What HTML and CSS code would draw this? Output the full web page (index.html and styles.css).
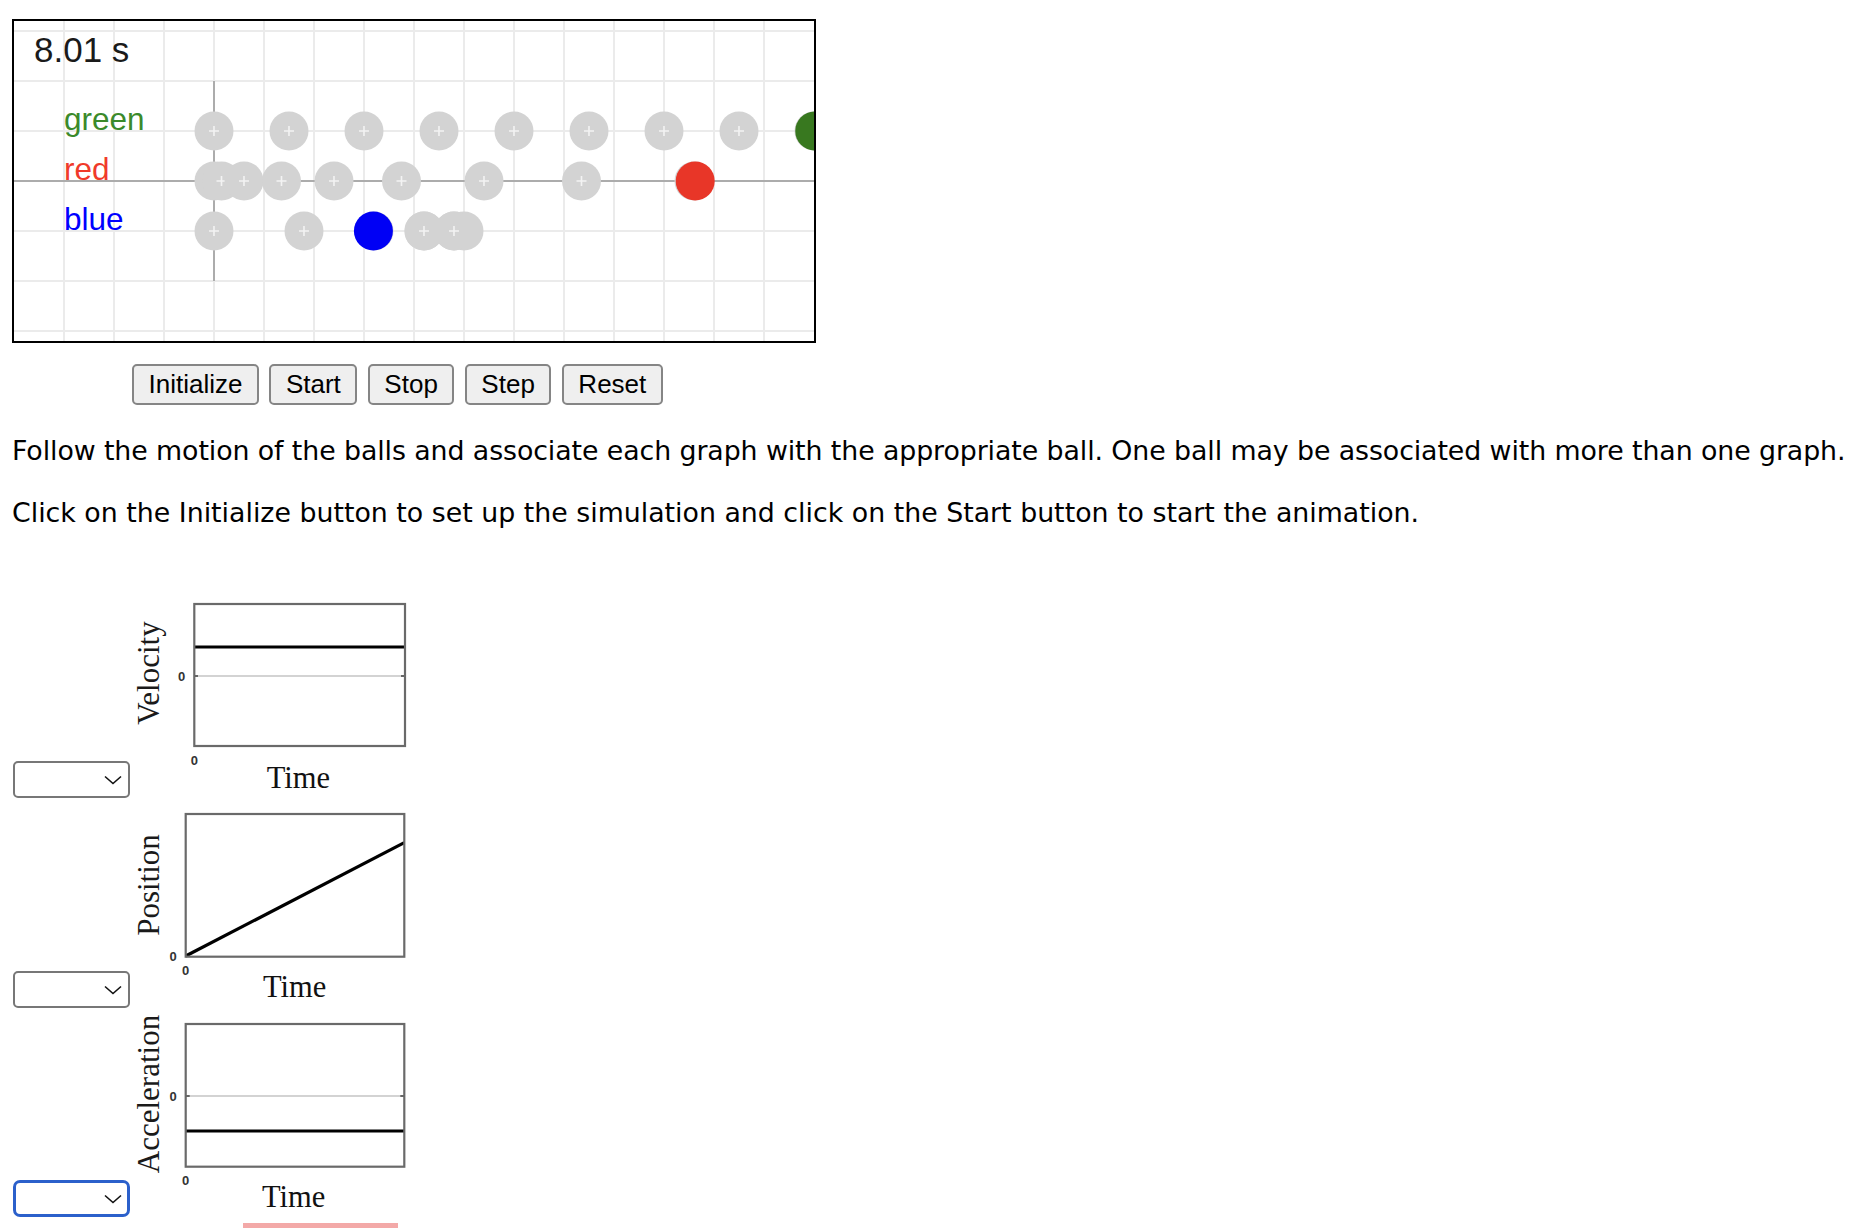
FILE: index.html
```html
<!DOCTYPE html>
<html lang="en">
<head>
<meta charset="utf-8">
<title>Ball motion</title>
<link rel="stylesheet" href="styles.css">
</head>
<body>
<div class="page">
  <div class="sim">
    <svg class="sim-canvas" width="800" height="320" viewBox="0 0 800 320">
      <g class="grid">
        <line x1="50" y1="0" x2="50" y2="320"/><line x1="100" y1="0" x2="100" y2="320"/>
        <line x1="150" y1="0" x2="150" y2="320"/><line x1="200" y1="0" x2="200" y2="320"/>
        <line x1="250" y1="0" x2="250" y2="320"/><line x1="300" y1="0" x2="300" y2="320"/>
        <line x1="350" y1="0" x2="350" y2="320"/><line x1="400" y1="0" x2="400" y2="320"/>
        <line x1="450" y1="0" x2="450" y2="320"/><line x1="500" y1="0" x2="500" y2="320"/>
        <line x1="550" y1="0" x2="550" y2="320"/><line x1="600" y1="0" x2="600" y2="320"/>
        <line x1="650" y1="0" x2="650" y2="320"/><line x1="700" y1="0" x2="700" y2="320"/>
        <line x1="750" y1="0" x2="750" y2="320"/>
        <line x1="0" y1="10" x2="800" y2="10"/><line x1="0" y1="60" x2="800" y2="60"/>
        <line x1="0" y1="110" x2="800" y2="110"/><line x1="0" y1="210" x2="800" y2="210"/>
        <line x1="0" y1="260" x2="800" y2="260"/><line x1="0" y1="310" x2="800" y2="310"/>
      </g>
      <g class="axes">
        <line x1="0" y1="160" x2="800" y2="160"/>
        <line x1="200" y1="60" x2="200" y2="260"/>
      </g>
      <text class="clock" x="20" y="41">8.01 s</text>
      <text class="lbl lbl-green" x="50" y="109">green</text>
      <text class="lbl lbl-red" x="50" y="159">red</text>
      <text class="lbl lbl-blue" x="50" y="209">blue</text>

      <g class="ghost">
        <!-- green: x = 200 + 75t -->
        <circle cx="200" cy="110" r="19.5"/><circle cx="275" cy="110" r="19.5"/>
        <circle cx="350" cy="110" r="19.5"/><circle cx="425" cy="110" r="19.5"/>
        <circle cx="500" cy="110" r="19.5"/><circle cx="575" cy="110" r="19.5"/>
        <circle cx="650" cy="110" r="19.5"/><circle cx="725" cy="110" r="19.5"/>
        <circle cx="800" cy="110" r="19.5"/>
      </g>
      <g class="plus">
        <path d="M195 110h10M200 105v10M270 110h10M275 105v10M345 110h10M350 105v10M420 110h10M425 105v10M495 110h10M500 105v10M570 110h10M575 105v10M645 110h10M650 105v10M720 110h10M725 105v10"/>
      </g>

      <!-- red: x = 200 + 7.5t^2 -->
      <g class="ghost-seq">
        <circle class="g" cx="200" cy="160" r="19.5"/><path class="p" d="M195 160h10M200 155v10"/>
        <circle class="g" cx="207.5" cy="160" r="19.5"/><path class="p" d="M202.5 160h10M207.5 155v10"/>
        <circle class="g" cx="230" cy="160" r="19.5"/><path class="p" d="M225 160h10M230 155v10"/>
        <circle class="g" cx="267.5" cy="160" r="19.5"/><path class="p" d="M262.5 160h10M267.5 155v10"/>
        <circle class="g" cx="320" cy="160" r="19.5"/><path class="p" d="M315 160h10M320 155v10"/>
        <circle class="g" cx="387.5" cy="160" r="19.5"/><path class="p" d="M382.5 160h10M387.5 155v10"/>
        <circle class="g" cx="470" cy="160" r="19.5"/><path class="p" d="M465 160h10M470 155v10"/>
        <circle class="g" cx="567.5" cy="160" r="19.5"/><path class="p" d="M562.5 160h10M567.5 155v10"/>
        <circle class="g" cx="680" cy="160" r="19.5"/>
      </g>

      <!-- blue: x = 200 + 100t - 10t^2 -->
      <g class="ghost-seq">
        <circle class="g" cx="200" cy="210" r="19.5"/><path class="p" d="M195 210h10M200 205v10"/>
        <circle class="g" cx="290" cy="210" r="19.5"/><path class="p" d="M285 210h10M290 205v10"/>
        <circle class="g" cx="360" cy="210" r="19.5"/>
        <circle class="g" cx="410" cy="210" r="19.5"/><path class="p" d="M405 210h10M410 205v10"/>
        <circle class="g" cx="440" cy="210" r="19.5"/><path class="p" d="M435 210h10M440 205v10"/>
        <circle class="g" cx="450" cy="210" r="19.5"/>
        <circle class="g" cx="440" cy="210" r="19.5"/><path class="p" d="M435 210h10M440 205v10"/>
        <circle class="g" cx="410" cy="210" r="19.5"/><path class="p" d="M405 210h10M410 205v10"/>
      </g>

      <circle class="ball-green" cx="800.75" cy="110" r="19.5"/>
      <circle class="ball-red" cx="681.2" cy="160" r="19.5"/>
      <circle class="ball-blue" cx="359.4" cy="210" r="19.5"/>
    </svg>
  </div>

  <div class="controls">
    <button class="btn" type="button">Initialize</button>
    <button class="btn" type="button">Start</button>
    <button class="btn" type="button">Stop</button>
    <button class="btn" type="button">Step</button>
    <button class="btn" type="button">Reset</button>
  </div>

  <p class="para para-1">Follow the motion of the balls and associate each graph with the appropriate ball. One ball may be associated with more than one graph.</p>
  <p class="para para-2">Click on the Initialize button to set up the simulation and click on the Start button to start the animation.</p>

  <div class="graphs">
    <div class="graph-row row-1">
      <div class="select">
        <svg class="chev" width="18" height="10" viewBox="0 0 18 10"><path d="M1 1.5l8 7 8-7"/></svg>
      </div>
      <svg class="graph" width="280" height="202" viewBox="0 0 280 202">
        <line class="zero" x1="64" y1="78" x2="275" y2="78"/>
        <path class="tick" d="M64 78h4M271 78h4"/>
        <line class="curve" x1="64" y1="49" x2="275" y2="49"/>
        <rect class="frame" x="64.3" y="6" width="210.7" height="142"/>
        <text class="zlab" x="51.7" y="78.5">0</text>
        <text class="zlab" x="64.3" y="162">0</text>
        <text class="axis-t" x="136.7" y="190">Time</text>
        <text class="axis-y" transform="translate(29 75) rotate(-90)">Velocity</text>
      </svg>
    </div>
    <div class="graph-row row-2">
      <div class="select">
        <svg class="chev" width="18" height="10" viewBox="0 0 18 10"><path d="M1 1.5l8 7 8-7"/></svg>
      </div>
      <svg class="graph" width="280" height="210" viewBox="0 0 280 210">
        <line class="curve" x1="55.7" y1="156" x2="274.3" y2="42.7"/>
        <rect class="frame" x="55.7" y="14" width="218.6" height="142.7"/>
        <text class="zlab" x="43" y="156">0</text>
        <text class="zlab" x="55.7" y="170">0</text>
        <text class="axis-t" x="133" y="197">Time</text>
        <text class="axis-y" transform="translate(29 85) rotate(-90)">Position</text>
      </svg>
    </div>
    <div class="graph-row row-3">
      <div class="select select-focus">
        <svg class="chev" width="18" height="10" viewBox="0 0 18 10"><path d="M1 1.5l8 7 8-7"/></svg>
      </div>
      <svg class="graph" width="280" height="210" viewBox="0 0 280 210">
        <line class="zero" x1="55.7" y1="86" x2="274.3" y2="86"/>
        <path class="tick" d="M55.7 86h4M270.3 86h4"/>
        <line class="curve" x1="55.7" y1="121" x2="274.3" y2="121"/>
        <rect class="frame" x="55.7" y="14" width="218.6" height="142.7"/>
        <text class="zlab" x="43" y="86">0</text>
        <text class="zlab" x="55.7" y="170">0</text>
        <text class="axis-t" x="132" y="197">Time</text>
        <text class="axis-y" transform="translate(29 84) rotate(-90)">Acceleration</text>
      </svg>
    </div>
    <div class="feedback-bar"></div>
  </div>
</div>
</body>
</html>
```

FILE: styles.css
```css
html, body {
  margin: 0;
  padding: 0;
  background: #ffffff;
}

.page {
  padding: 19px 0 0 12px;
  font-family: "DejaVu Sans", Verdana, sans-serif;
  color: #000;
}

/* ---------- simulation canvas ---------- */
.sim {
  width: 800px;
  height: 320px;
  border: 2px solid #000;
  overflow: hidden;
}

.sim-canvas {
  display: block;
}

.grid line {
  stroke: #ebebeb;
  stroke-width: 2;
}

.axes line {
  stroke: #acacac;
  stroke-width: 2;
}

.clock {
  font-family: "Liberation Sans", Arial, sans-serif;
  font-size: 35px;
  fill: #1a1a1a;
}

.lbl {
  font-family: "Liberation Sans", Arial, sans-serif;
  font-size: 31.5px;
}

.lbl-green { fill: #3b8a2b; }
.lbl-red { fill: #f03a2a; }
.lbl-blue { fill: #0000ff; }

.ghost circle,
.ghost-seq .g {
  fill: #d3d3d3;
}

.plus path,
.ghost-seq .p {
  stroke: #f3f3f3;
  stroke-width: 1.6;
  fill: none;
}

.ball-green { fill: #38781f; }
.ball-red { fill: #e83628; }
.ball-blue { fill: #0000f5; }

/* ---------- buttons ---------- */
.controls {
  display: flex;
  gap: 10.5px;
  margin: 21px 0 0 120px;
}

.btn {
  font-family: "Liberation Sans", Arial, sans-serif;
  font-size: 26px;
  line-height: 37px;
  height: 41px;
  padding: 0 14.5px;
  border: 2px solid #858585;
  border-radius: 5px;
  background: #efefef;
  color: #000;
}

/* ---------- instructions ---------- */
.para {
  font-size: 26.8px;
  line-height: 30px;
  margin: 0;
  white-space: nowrap;
}

.para-1 {
  margin-top: 31px;
  letter-spacing: -0.09px;
}

.para-2 {
  margin-top: 32px;
}

/* ---------- graphs ---------- */
.graphs {
  margin-top: 70px;
  display: flex;
  flex-direction: column;
}

.graph-row {
  display: flex;
  align-items: flex-end;
}

.select {
  width: 117px;
  height: 37px;
  box-sizing: border-box;
  margin-left: 1px;
  margin-bottom: 2px;
  border: 2px solid #777;
  border-radius: 5px;
  background: #fff;
  display: flex;
  align-items: center;
  justify-content: flex-end;
  padding-right: 6px;
}

.select-focus {
  border: 3px solid #2b60cb;
  border-radius: 7px;
  padding-right: 5px;
  margin-bottom: 3px;
}

.chev path {
  fill: none;
  stroke: #111;
  stroke-width: 1.6;
}

.graph {
  display: block;
}

.frame {
  fill: none;
  stroke: #6a6a6a;
  stroke-width: 2.2;
}

.zero {
  stroke: #c4c4c4;
  stroke-width: 1.6;
}

.tick {
  stroke: #444;
  stroke-width: 1.6;
}

.curve {
  stroke: #000;
  stroke-width: 3.2;
}

.zlab {
  font-family: "Liberation Sans", Arial, sans-serif;
  font-size: 13px;
  font-weight: bold;
  fill: #333;
  text-anchor: middle;
  dominant-baseline: central;
}

.axis-t {
  font-family: "Liberation Serif", "Times New Roman", serif;
  font-size: 30.5px;
  fill: #111;
}

.axis-y {
  font-family: "Liberation Serif", "Times New Roman", serif;
  font-size: 31px;
  fill: #1a1a1a;
  text-anchor: middle;
}

.feedback-bar {
  margin: 3px 0 0 231px;
  width: 155px;
  height: 12px;
  background: #f3a9a8;
}
```
